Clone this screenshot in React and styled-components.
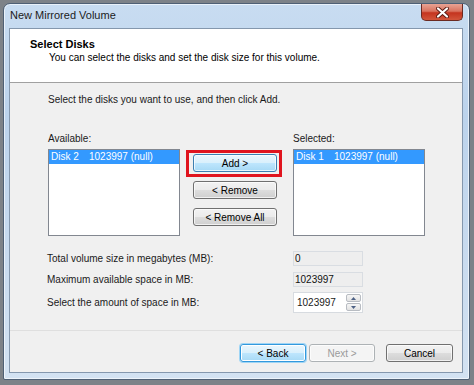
import styled, { createGlobalStyle } from "styled-components";

const GlobalStyle = createGlobalStyle`
  html, body {
    margin: 0;
    padding: 0;
    background: #7d8288;
    font-family: "Liberation Sans", Arial, sans-serif;
    font-size: 10px;
    color: #1a1a1a;
  }
  * { box-sizing: border-box; }
`

const Window = styled.div`
  margin: 3px 0 0 3px;
  width: 467px;
  height: 377px;
  display: flex;
  flex-direction: column;
  border: 1px solid #4f6075;
  border-radius: 7px 7px 2px 2px;
  padding: 0 6px 6px 5px;
  background: linear-gradient(180deg, #c8dcf1 0%, #bcd3ec 30%, #c6d9ee 60%, #d3e2f2 100%);
  box-shadow: inset 0 0 0 1px rgba(255,255,255,0.6);
`

const TitleBar = styled.div`
  height: 24px;
  display: flex;
  align-items: flex-start;
`

const Title = styled.span`
  margin-top: 5px;
  padding-left: 1px;
  font-size: 11px;
  color: #1c1c1c;
`

const CloseButton = styled.div`
  margin-left: auto;
  width: 42px;
  height: 17px;
  border: 1px solid #6b2a22;
  border-top: none;
  border-radius: 0 0 5px 5px;
  background: linear-gradient(180deg, #e8a394 0%, #d9735f 45%, #c4341f 55%, #d2553b 100%);
  display: flex;
  align-items: center;
  justify-content: center;
`

const Client = styled.div`
  flex: 1;
  display: flex;
  flex-direction: column;
  border: 1px solid #8497ad;
  background: #f0f0f0;
`

const Header = styled.div`
  height: 54px;
  background: #ffffff;
  border-bottom: 1px solid #a0a0a0;
  padding: 8px 0 0 20px;
  line-height: 14px;
`

const HeaderTitle = styled.div`
  font-weight: bold;
  font-size: 11px;
  color: #000;
`

const HeaderText = styled.div`
  padding-left: 19px;
  color: #000;
`

const Body = styled.div`
  flex: 1;
  padding: 10px 0 0 38px;
  line-height: 14px;
`

const Intro = styled.div`
  margin-bottom: 25px;
`

const ListsRow = styled.div`
  display: flex;
  align-items: flex-start;
`

const ListColumn = styled.div`
  display: flex;
  flex-direction: column;
  gap: 3px;
  width: 132px;
`

const ListBox = styled.div`
  height: 87px;
  background: #fff;
  border: 1px solid #828790;
`

const ListItem = styled.div`
  height: 14px;
  display: flex;
  align-items: center;
  padding-left: 2px;
  background: #3399ff;
  color: #fff;
  line-height: 14px;
`

const DiskName = styled.span`
  width: 38px;
`

const ButtonColumn = styled.div`
  width: 96px;
  margin: 18px 11px 0 6px;
  display: flex;
  flex-direction: column;
  align-items: flex-start;
`

const Highlight = styled.div`
  border: 3px solid #e0141e;
  padding: 1px 2px 2px 4px;
  margin-bottom: 4px;
`

const Button = styled.button`
  width: ${({ $w }) => $w || 84}px;
  height: 18px;
  margin: ${({ $m }) => $m || "0"};
  padding: 0;
  font-family: inherit;
  font-size: 10px;
  border-radius: 3px;
  border: 1px solid ${({ $variant }) =>
    $variant === "focus" ? "#3c7fb1" : $variant === "default" ? "#3399dd" : $variant === "disabled" ? "#adb2b5" : "#707070"};
  color: ${({ $variant }) => ($variant === "disabled" ? "#9a9a9a" : "#000")};
  background: ${({ $variant }) =>
    $variant === "focus" || $variant === "default"
      ? "linear-gradient(180deg, #eaf6fd 0%, #d9f0fc 50%, #bee6fd 51%, #a7d9f5 100%)"
      : $variant === "disabled"
      ? "#f4f4f4"
      : "linear-gradient(180deg, #f2f2f2 0%, #ebebeb 50%, #dddddd 51%, #cfcfcf 100%)"};
  box-shadow: ${({ $variant }) =>
    $variant === "default" ? "0 0 0 1px #9fd5f5, inset 0 0 0 1px #fff" : "inset 0 0 0 1px rgba(255,255,255,0.7)"};
`

const Fields = styled.div`
  margin-top: 15px;
  display: grid;
  grid-template-columns: 245px 75px;
  row-gap: 6px;
  align-items: center;
`

const FieldLabel = styled.span`
  margin-left: -1px;
`

const ReadOnly = styled.div`
  width: 70px;
  height: 15px;
  border: 1px solid #d9dde2;
  background: #eeeeee;
  padding-left: 1px;
  line-height: 13px;
  color: #111;
`

const Spin = styled.div`
  width: 70px;
  height: 21px;
  display: flex;
  border: 1px solid #d7dbe0;
  background: #fff;
  margin-top: -1px;
`

const SpinValue = styled.div`
  flex: 1;
  padding: 3px 0 0 3px;
`

const SpinButtons = styled.div`
  width: 16px;
  display: flex;
  flex-direction: column;
  gap: 1px;
  padding: 1px 1px 1px 0;
`

const SpinArrow = styled.div`
  height: 8px;
  border: 1px solid #b8bcc2;
  border-radius: 2px;
  background: linear-gradient(180deg, #f6f6f6, #e2e2e2);
  display: flex;
  align-items: center;
  justify-content: center;
  line-height: 0;
`

const Footer = styled.div`
  height: 42px;
  border-top: 1px solid #dfdfdf;
  display: flex;
  justify-content: flex-end;
  align-items: flex-start;
  padding: 13px 9px 0 0;
`

export default function App() {
  return (
    <>
      <GlobalStyle />
      <Window>
        <TitleBar>
          <Title>New Mirrored Volume</Title>
          <CloseButton>
            <svg width="13" height="11" viewBox="0 0 13 11">
              <path d="M2 1.5 L11 9.5 M11 1.5 L2 9.5" stroke="#5a1a12" strokeWidth="4" strokeLinecap="round" />
              <path d="M2 1.5 L11 9.5 M11 1.5 L2 9.5" stroke="#ffffff" strokeWidth="2.2" strokeLinecap="round" />
            </svg>
          </CloseButton>
        </TitleBar>
        <Client>
          <Header>
            <HeaderTitle>Select Disks</HeaderTitle>
            <HeaderText>You can select the disks and set the disk size for this volume.</HeaderText>
          </Header>
          <Body>
            <Intro>Select the disks you want to use, and then click Add.</Intro>
            <ListsRow>
              <ListColumn>
                <span>Available:</span>
                <ListBox>
                  <ListItem>
                    <DiskName>Disk 2</DiskName>
                    <span>1023997 (null)</span>
                  </ListItem>
                </ListBox>
              </ListColumn>
              <ButtonColumn>
                <Highlight>
                  <Button $variant="focus">Add &gt;</Button>
                </Highlight>
                <Button $m="0 0 9px 7px">&lt; Remove</Button>
                <Button $m="0 0 0 7px">&lt; Remove All</Button>
              </ButtonColumn>
              <ListColumn>
                <span>Selected:</span>
                <ListBox>
                  <ListItem>
                    <DiskName>Disk 1</DiskName>
                    <span>1023997 (null)</span>
                  </ListItem>
                </ListBox>
              </ListColumn>
            </ListsRow>
            <Fields>
              <FieldLabel>Total volume size in megabytes (MB):</FieldLabel>
              <ReadOnly>0</ReadOnly>
              <FieldLabel>Maximum available space in MB:</FieldLabel>
              <ReadOnly>1023997</ReadOnly>
              <FieldLabel>Select the amount of space in MB:</FieldLabel>
              <Spin>
                <SpinValue>1023997</SpinValue>
                <SpinButtons>
                  <SpinArrow>
                    <svg width="5" height="3" viewBox="0 0 5 3"><path d="M0 3 L2.5 0 L5 3 Z" fill="#4d6185" /></svg>
                  </SpinArrow>
                  <SpinArrow>
                    <svg width="5" height="3" viewBox="0 0 5 3"><path d="M0 0 L2.5 3 L5 0 Z" fill="#4d6185" /></svg>
                  </SpinArrow>
                </SpinButtons>
              </Spin>
            </Fields>
          </Body>
          <Footer>
            <Button $variant="default" $w={66} $m="0 3px 0 0">&lt; Back</Button>
            <Button $variant="disabled" $w={66} $m="0 11px 0 0">Next &gt;</Button>
            <Button $w={67}>Cancel</Button>
          </Footer>
        </Client>
      </Window>
    </>
  );
}
